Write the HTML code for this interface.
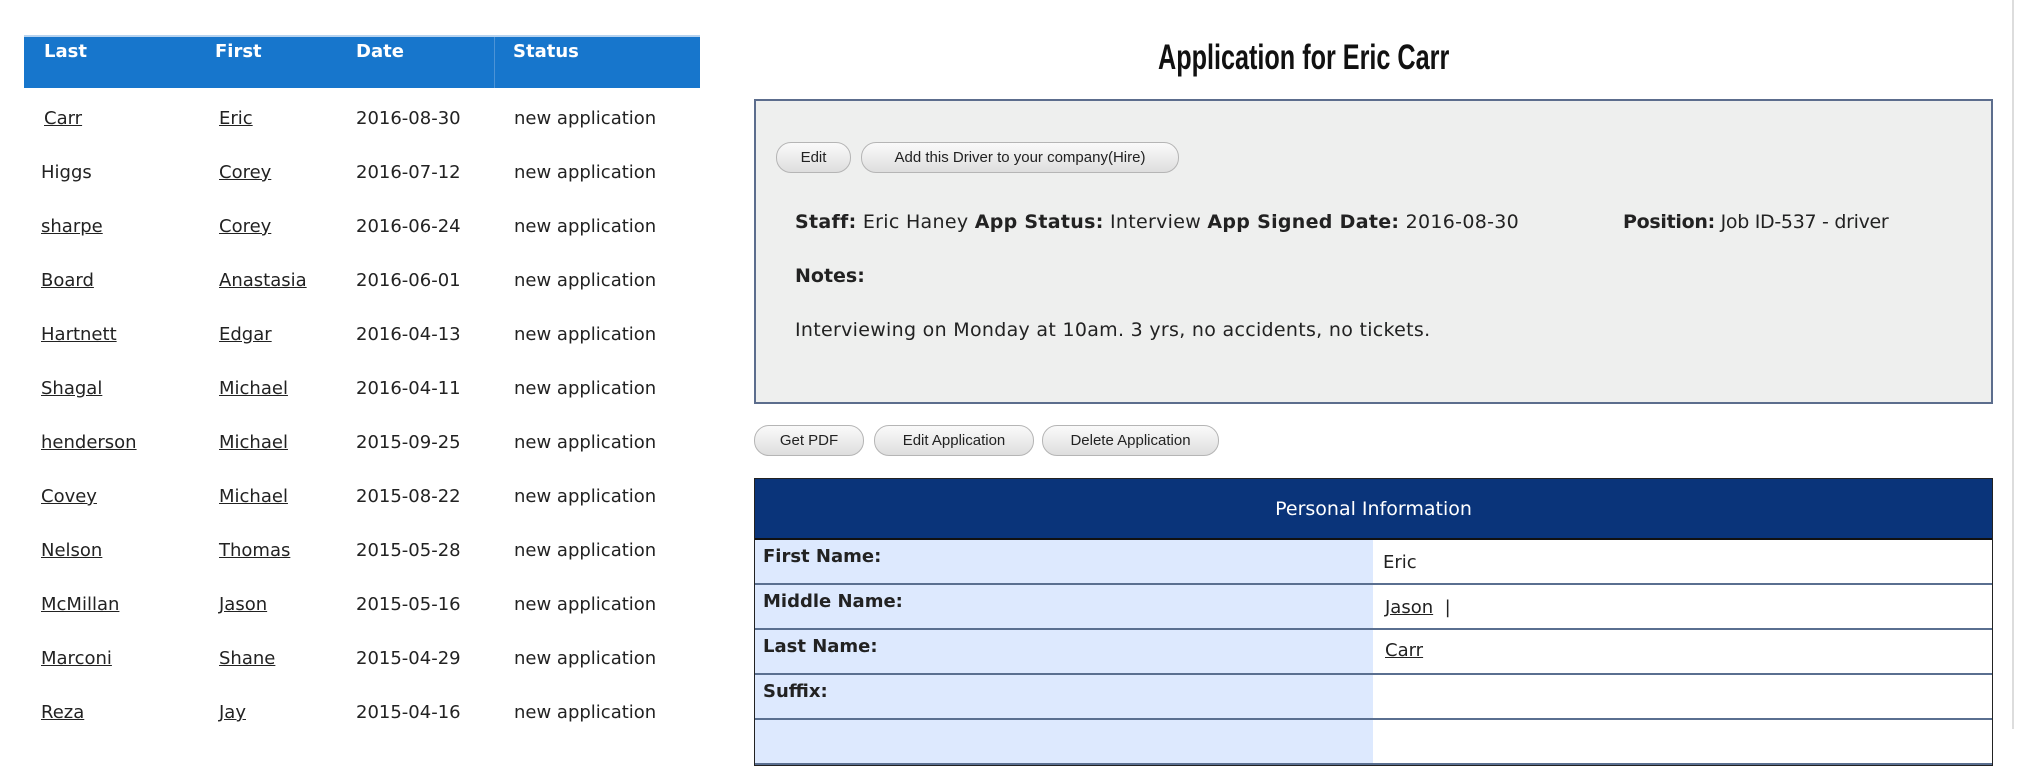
<!DOCTYPE html>
<html><head><style>
*{margin:0;padding:0;box-sizing:border-box}
body{width:2021px;height:729px;overflow:hidden;background:#fff;font-family:"DejaVu Sans","Liberation Sans",sans-serif;color:#222;position:relative}
.a{position:absolute;white-space:nowrap}
.hd{position:absolute;left:24px;top:35px;width:676px;height:53px;background:#1776cc;border-top:2px solid #b7d3ef}
.hd span{position:absolute;top:4px;color:#fff;font-weight:bold;font-size:18px}
.row{font-size:18px;margin-top:3px}
u{text-decoration:underline}
.btn{position:absolute;height:31px;border:1px solid #b5b5b5;border-radius:15px;background:linear-gradient(#fafafa,#dedede);font-family:"Liberation Sans",sans-serif;font-size:15px;color:#222;text-align:center;line-height:29px}
.tbl{position:absolute;left:754px;top:478px;width:1239px;border:1px solid #222}
.th{height:61px;background:#0a347a;color:#fff;text-align:center;font-size:19px;line-height:61px;border-bottom:2px solid #111}
.tr{height:45px;display:flex;border-bottom:2px solid #5a6f90}
.tl{width:618px;background:#dde9fe;font-weight:bold;font-size:18px;padding:6px 8px}
.tv{flex:1;font-size:18px;padding:12px 10px}
</style></head><body>
<div class="hd"><span style="left:20px">Last</span><span style="left:191px">First</span><span style="left:332px">Date</span><span style="left:489px">Status</span><div style="position:absolute;left:470px;top:0;width:1px;height:51px;background:#4c93d6"></div></div>
<div class="a row" style="left:44px;top:105px"><u>Carr</u></div><div class="a row" style="left:219px;top:105px"><u>Eric</u></div><div class="a row" style="left:356px;top:105px">2016-08-30</div><div class="a row" style="left:514px;top:105px">new application</div>
<div class="a row" style="left:41px;top:159px">Higgs</div><div class="a row" style="left:219px;top:159px"><u>Corey</u></div><div class="a row" style="left:356px;top:159px">2016-07-12</div><div class="a row" style="left:514px;top:159px">new application</div>
<div class="a row" style="left:41px;top:213px"><u>sharpe</u></div><div class="a row" style="left:219px;top:213px"><u>Corey</u></div><div class="a row" style="left:356px;top:213px">2016-06-24</div><div class="a row" style="left:514px;top:213px">new application</div>
<div class="a row" style="left:41px;top:267px"><u>Board</u></div><div class="a row" style="left:219px;top:267px"><u>Anastasia</u></div><div class="a row" style="left:356px;top:267px">2016-06-01</div><div class="a row" style="left:514px;top:267px">new application</div>
<div class="a row" style="left:41px;top:321px"><u>Hartnett</u></div><div class="a row" style="left:219px;top:321px"><u>Edgar</u></div><div class="a row" style="left:356px;top:321px">2016-04-13</div><div class="a row" style="left:514px;top:321px">new application</div>
<div class="a row" style="left:41px;top:375px"><u>Shagal</u></div><div class="a row" style="left:219px;top:375px"><u>Michael</u></div><div class="a row" style="left:356px;top:375px">2016-04-11</div><div class="a row" style="left:514px;top:375px">new application</div>
<div class="a row" style="left:41px;top:429px"><u>henderson</u></div><div class="a row" style="left:219px;top:429px"><u>Michael</u></div><div class="a row" style="left:356px;top:429px">2015-09-25</div><div class="a row" style="left:514px;top:429px">new application</div>
<div class="a row" style="left:41px;top:483px"><u>Covey</u></div><div class="a row" style="left:219px;top:483px"><u>Michael</u></div><div class="a row" style="left:356px;top:483px">2015-08-22</div><div class="a row" style="left:514px;top:483px">new application</div>
<div class="a row" style="left:41px;top:537px"><u>Nelson</u></div><div class="a row" style="left:219px;top:537px"><u>Thomas</u></div><div class="a row" style="left:356px;top:537px">2015-05-28</div><div class="a row" style="left:514px;top:537px">new application</div>
<div class="a row" style="left:41px;top:591px"><u>McMillan</u></div><div class="a row" style="left:219px;top:591px"><u>Jason</u></div><div class="a row" style="left:356px;top:591px">2015-05-16</div><div class="a row" style="left:514px;top:591px">new application</div>
<div class="a row" style="left:41px;top:645px"><u>Marconi</u></div><div class="a row" style="left:219px;top:645px"><u>Shane</u></div><div class="a row" style="left:356px;top:645px">2015-04-29</div><div class="a row" style="left:514px;top:645px">new application</div>
<div class="a row" style="left:41px;top:699px"><u>Reza</u></div><div class="a row" style="left:219px;top:699px"><u>Jay</u></div><div class="a row" style="left:356px;top:699px">2015-04-16</div><div class="a row" style="left:514px;top:699px">new application</div>

<div class="a" style="left:1102px;top:38px;width:400px;text-align:center;font-family:'Liberation Sans',sans-serif;font-weight:bold;font-size:35px;color:#111;transform:scaleX(0.72)">Application for Eric Carr</div>

<div class="a" style="left:754px;top:99px;width:1239px;height:305px;background:#eeefee;border:2px solid #5c6d8d"></div>
<div class="btn" style="left:776px;top:142px;width:75px">Edit</div>
<div class="btn" style="left:861px;top:142px;width:318px">Add this Driver to your company(Hire)</div>
<div class="a" style="left:795px;top:211px;font-size:19px;letter-spacing:0.3px"><b>Staff:</b> Eric Haney <b>App Status:</b> Interview <b>App Signed Date:</b> 2016-08-30</div>
<div class="a" style="left:1623px;top:211px;font-size:19px;letter-spacing:-0.3px"><b>Position:</b> Job ID-537 - driver</div>
<div class="a" style="left:795px;top:265px;font-size:19px;font-weight:bold">Notes:</div>
<div class="a" style="left:795px;top:319px;font-size:19px;letter-spacing:0.3px">Interviewing on Monday at 10am. 3 yrs, no accidents, no tickets.</div>

<div class="btn" style="left:754px;top:425px;width:110px">Get PDF</div>
<div class="btn" style="left:874px;top:425px;width:160px">Edit Application</div>
<div class="btn" style="left:1042px;top:425px;width:177px">Delete Application</div>

<div class="tbl">
<div class="th">Personal Information</div>
<div class="tr"><div class="tl">First Name:</div><div class="tv" style="padding-top:12px">Eric</div></div>
<div class="tr"><div class="tl">Middle Name:</div><div class="tv" style="padding-left:12px"><u>Jason</u> &nbsp;|</div></div>
<div class="tr"><div class="tl">Last Name:</div><div class="tv" style="padding-left:12px;padding-top:10px"><u>Carr</u></div></div>
<div class="tr"><div class="tl">Suffix:</div><div class="tv"></div></div>
<div class="tr"><div class="tl"></div><div class="tv"></div></div>
</div>
<div class="a" style="left:2012px;top:0;width:2px;height:729px;background:#ddd"></div>
</body></html>
